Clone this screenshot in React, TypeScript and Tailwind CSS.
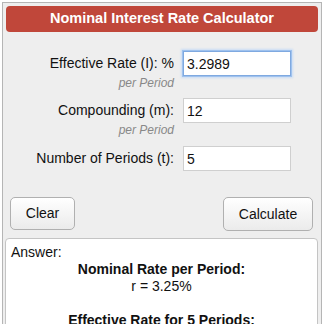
import React from "react";

const font = { fontFamily: '"Liberation Sans", Arial, Helvetica, sans-serif' };

function Field({
    label,
    sub,
    value,
    focused,
    className,
}: {
    label: string;
    sub?: string;
    value: string;
    focused?: boolean;
    className?: string;
}) {
    return (
        <div className={`flex items-start ${className ?? ""}`}>
            <div className="w-[171px] text-right">
                <div className="h-[25px] text-[14px] leading-[25px] text-[#111]">{label}</div>
                {sub && (
                    <div className="text-[12px] italic leading-[14px] text-[#888]">{sub}</div>
                )}
            </div>
            <input
                readOnly
                value={value}
                className={
                    focused
                        ? "ml-[9px] h-[25px] w-[108px] border border-[#7fa9e0] bg-white px-[3px] text-[14px] text-[#111] shadow-[0_0_0_1px_#9fc2ee,0_0_2px_2px_#c9dcf5] outline-none"
                        : "ml-[9px] h-[25px] w-[108px] border border-[#cfcfcf] bg-white px-[3px] text-[14px] text-[#111] outline-none"
                }
                style={font}
            />
        </div>
    );
}

export default function App() {
    return (
        <div className="h-[324px] w-[324px] overflow-hidden bg-white pl-[2px] pt-[2px]" style={font}>
            <div className="h-[330px] w-[320px] border border-[#b5b5b5] bg-[#eeeeee]">
                <div className="mx-[3px] mt-[3px] flex h-[26px] items-center justify-center rounded-[4px] bg-[#c0473a] text-[14.5px] font-bold text-white">
                    Nominal Interest Rate Calculator
                </div>

                <Field className="mt-[19px]" label="Effective Rate (I): %" sub="per Period" value="3.2989" focused />
                <Field className="mt-[8px]" label="Compounding (m):" sub="per Period" value="12" />
                <Field className="mt-[9px]" label="Number of Periods (t):" value="5" />

                <div className="mt-[26px] flex justify-between pl-[7px] pr-[8px]">
                    <button className="h-[33px] w-[65px] rounded-[5px] border border-[#b0b0b0] bg-gradient-to-b from-white to-[#ebebeb] text-[14px] text-[#111]">
                        Clear
                    </button>
                    <button className="h-[34px] w-[90px] rounded-[5px] border border-[#b0b0b0] bg-gradient-to-b from-white to-[#ebebeb] text-[14px] text-[#111]">
                        Calculate
                    </button>
                </div>

                <div className="mb-0 ml-[2px] mr-[3px] mt-[7px] h-[120px] rounded-t-[4px] border border-[#c4c4c4] bg-white px-[5px] pt-[5px] text-[14px] leading-[17px] text-[#111]">
                    <div>Answer:</div>
                    <div className="text-center font-bold">Nominal Rate per Period:</div>
                    <div className="text-center">r = 3.25%</div>
                    <div className="mt-[17px] text-center font-bold">Effective Rate for 5 Periods:</div>
                </div>
            </div>
        </div>
    );
}
